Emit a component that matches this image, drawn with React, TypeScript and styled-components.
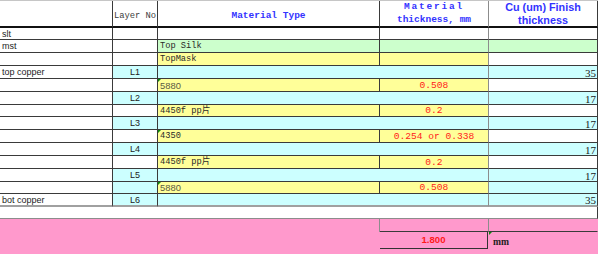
import React from "react";
import styled, { createGlobalStyle, css } from "styled-components";

const GlobalStyle = createGlobalStyle`
  html,
  body {
    margin: 0;
    padding: 0;
    background: #ffffff;
  }

  body {
    width: 600px;
    height: 254px;
    overflow: hidden;
  }
`;

const Fill = {
  white: "#ffffff",
  green: "#ccffcc",
  yellow: "#ffff99",
  cyan: "#ccffff",
  pink: "#ff99cc",
};

type FillName = keyof typeof Fill;

const INK = "#3a3a3a";
const SOFT = "#8c8c8c";
const BLUE = "#3333ff";
const RED = "#ff1a1a";

const SANS = `"Liberation Sans", Arial, sans-serif`;
const MONO = `"Liberation Mono", "Noto Sans CJK SC", monospace`;
const SERIF = `"Liberation Serif", "Times New Roman", serif`;

const edgeColor = {
  ink: INK,
  soft: SOFT,
  none: "transparent",
};

const ruleStyle = {
  ink: `1px solid ${INK}`,
  soft: `1px solid ${SOFT}`,
  heavy: `2px solid #111111`,
  fade: `2px solid #a0a0a0`,
  none: "0",
};

type EdgeName = keyof typeof edgeColor;
type RuleName = keyof typeof ruleStyle;

const Sheet = styled.div`
  width: 598px;

  border-top: 1px solid #c6c6c6;
`;

const Row = styled.div<{ $h: number }>`
  display: grid;
  grid-template-columns: 113px 45px 222px 109px 109px;

  height: ${({ $h }) => $h}px;
`;

type CellProps = {
  $fill?: FillName;
  $span?: number;
  $edge?: EdgeName;
  $rule?: RuleName;
  $flag?: boolean;
};

const Cell = styled.div<CellProps>`
  overflow: hidden;

  position: relative;
  box-sizing: border-box;

  display: flex;
  align-items: center;

  grid-column: span ${({ $span = 1 }) => $span};

  white-space: nowrap;

  background: ${({ $fill = "white" }) => Fill[$fill]};
  border-right: 1px solid ${({ $edge = "ink" }) => edgeColor[$edge]};
  border-bottom: ${({ $rule = "ink" }) => ruleStyle[$rule]};

  ${({ $flag }) =>
    $flag &&
    css`
      &::before {
        content: "";

        position: absolute;
        top: 0;
        left: 0;

        border-top: 3px solid #0a8a0a;
        border-right: 3px solid transparent;
      }
    `}
`;

const Label = styled(Cell)`
  padding: 1px 0 0 2px;

  font: 9px/1 ${SANS};
  color: #1c1c1c;
`;

const LayerNo = styled(Cell)`
  justify-content: center;

  padding-top: 1px;

  font: 9px/1 ${SANS};
  color: #222222;
`;

const Material = styled(Cell)<{ $sans?: boolean }>`
  padding: 1px 0 0 2px;

  font: 8.7px/1 ${MONO};
  color: #2a2a2a;

  ${({ $sans }) =>
    $sans &&
    css`
      font: 9.4px/1 ${SANS};
      color: #5c5c44;
    `}
`;

const Thickness = styled(Cell)`
  justify-content: center;

  padding-top: 1px;

  font: 9.6px/1 ${MONO};
  color: ${RED};
`;

const Copper = styled(Cell)`
  justify-content: flex-end;

  padding: 2px 1px 0 0;

  font: 11px/1 ${SERIF};
  color: #1a1a1a;
`;

const Head = styled(Cell)`
  flex-direction: column;
  justify-content: center;

  padding-top: 1px;

  text-align: center;
`;

const HeadMono = styled.span<{ $wide?: boolean; $drop?: boolean }>`
  display: block;

  padding-top: ${({ $drop }) => ($drop ? "5px" : "0")};

  font: bold 9.5px/12.7px ${MONO};
  color: ${BLUE};

  letter-spacing: ${({ $wide }) => ($wide ? "1.8px" : "0")};
`;

const HeadSans = styled.span`
  display: block;

  font: bold 10.8px/12.7px ${SANS};
  color: ${BLUE};
`;

const HeadGray = styled.span`
  padding-top: 4px;

  font: 8.8px/1 ${MONO};
  color: #3c3c3c;
`;

const TotalSlot = styled(Cell)`
  align-items: flex-start;
`;

const TotalBox = styled.div`
  box-sizing: border-box;

  display: flex;
  align-items: center;
  justify-content: center;

  width: 110px;
  height: 17px;
  margin-left: -1px;

  border: 1px solid #333333;
  border-top: 0;

  font: bold 9.6px/1 ${SANS};
  color: ${RED};
`;

const Unit = styled(Cell)`
  align-items: flex-start;

  padding: 5px 0 0 4px;

  font: bold 9.6px/1 ${SERIF};
  color: #222222;
`;

type Spec =
  | { type: "note"; h: number; label: string }
  | {
      type: "layer";
      h: number;
      label?: string;
      layer: string;
      cu: string;
      rule?: RuleName;
    }
  | {
      type: "material";
      h: number;
      label?: string;
      name: string;
      fill: "green" | "yellow";
      thick?: string;
      sans?: boolean;
      flag?: boolean;
      layerFill?: FillName;
      cuFill?: FillName;
    };

const stack: Spec[] = [
  { type: "note", h: 12, label: "slt" },
  { type: "material", h: 13, label: "mst", name: "Top Silk", fill: "green", cuFill: "green" },
  { type: "material", h: 13, name: "TopMask", fill: "yellow" },
  { type: "layer", h: 13, label: "top copper", layer: "L1", cu: "35" },
  { type: "material", h: 13, name: "5880", fill: "yellow", thick: "0.508", sans: true, flag: true },
  { type: "layer", h: 13, layer: "L2", cu: "17" },
  { type: "material", h: 12, name: "4450f pp片", fill: "yellow", thick: "0.2" },
  { type: "layer", h: 13, layer: "L3", cu: "17" },
  { type: "material", h: 13, name: "4350", fill: "yellow", thick: "0.254 or 0.338", flag: true },
  { type: "layer", h: 13, layer: "L4", cu: "17" },
  { type: "material", h: 13, name: "4450f pp片", fill: "yellow", thick: "0.2" },
  { type: "layer", h: 13, layer: "L5", cu: "17" },
  {
    type: "material",
    h: 12,
    name: "5880",
    fill: "yellow",
    thick: "0.508",
    sans: true,
    flag: true,
    layerFill: "cyan",
    cuFill: "cyan",
  },
  { type: "layer", h: 13, label: "bot copper", layer: "L6", cu: "35", rule: "fade" },
];

const StackRow = ({ spec }: { spec: Spec }) => {
  if (spec.type === "note") {
    return (
      <Row $h={spec.h}>
        <Label>{spec.label}</Label>
        <Cell />
        <Cell />
        <Cell $edge="soft" />
        <Cell />
      </Row>
    );
  }

  if (spec.type === "layer") {
    const rule = spec.rule ?? "ink";
    return (
      <Row $h={spec.h}>
        <Label $rule={rule}>{spec.label}</Label>
        <LayerNo $fill="cyan" $rule={rule}>
          {spec.layer}
        </LayerNo>
        <Cell $fill="cyan" $span={2} $edge="soft" $rule={rule} />
        <Copper $fill="cyan" $rule={rule}>
          {spec.cu}
        </Copper>
      </Row>
    );
  }

  return (
    <Row $h={spec.h}>
      <Label>{spec.label}</Label>
      <Cell $fill={spec.layerFill} />
      <Material $fill={spec.fill} $sans={spec.sans} $flag={spec.flag}>
        {spec.name}
      </Material>
      <Thickness $fill={spec.fill} $edge="soft">
        {spec.thick}
      </Thickness>
      <Cell $fill={spec.cuFill} />
    </Row>
  );
};

export default function App() {
  return (
    <>
      <GlobalStyle />
      <Sheet>
        <Row $h={27}>
          <Head $rule="heavy" />
          <Head $rule="heavy">
            <HeadGray>Layer No</HeadGray>
          </Head>
          <Head $rule="heavy">
            <HeadMono $drop>Material Type</HeadMono>
          </Head>
          <Head $rule="heavy" $edge="soft">
            <HeadMono $wide>Material</HeadMono>
            <HeadMono>thickness, mm</HeadMono>
          </Head>
          <Head $rule="heavy">
            <HeadSans>Cu (um) Finish</HeadSans>
            <HeadSans>thickness</HeadSans>
          </Head>
        </Row>

        {stack.map((spec, i) => (
          <StackRow key={i} spec={spec} />
        ))}

        <Row $h={12}>
          <Cell $span={5} $rule="soft" />
        </Row>

        <Row $h={13}>
          <Cell $fill="pink" $span={2} $edge="none" $rule="none" />
          <Cell $fill="pink" $edge="soft" $rule="none" />
          <Cell $fill="pink" $edge="soft" />
          <Cell $fill="pink" $edge="none" />
        </Row>
        <Row $h={23}>
          <Cell $fill="pink" $span={3} $edge="none" $rule="none" />
          <TotalSlot $fill="pink" $edge="none" $rule="none">
            <TotalBox>1.800</TotalBox>
          </TotalSlot>
          <Unit $fill="pink" $edge="none" $rule="none" $flag>
            mm
          </Unit>
        </Row>
      </Sheet>
    </>
  );
}
